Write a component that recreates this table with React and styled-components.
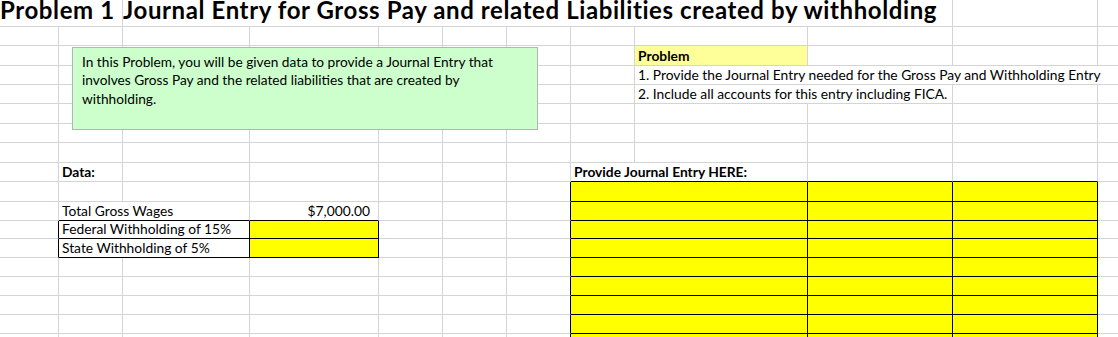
import React from 'react';
import styled, { createGlobalStyle } from 'styled-components';

//column widths and row heights of the sheet (A..L, rows 1..18)
const COLS = [59, 64, 127, 129, 64, 64, 64, 64, 173, 145, 145, 60];
const ROWS = [27, 19, 20, 19, 19, 20, 19, 20, 19, 20, 19, 18, 19, 19, 19, 19, 19, 19];

const GRID = '#d4d4d4';
const BLACK = '#000';
const YELLOW = '#ffff00';

const GlobalStyle = createGlobalStyle`
  html, body {
    margin: 0;
    padding: 0;
    background: #fff;
    overflow: hidden;
  }
  body {
    font-family: Lato, "Open Sans", "Liberation Sans", sans-serif;
    color: #000;
  }
`;

const Page = styled.div`
  position: relative;
  width: 1118px;
  height: 337px;
  overflow: hidden;
`;

const Sheet = styled.div`
  display: grid;
  grid-template-columns: ${COLS.map(w => `${w}px`).join(' ')};
  grid-template-rows: ${ROWS.map(h => `${h}px`).join(' ')};
`;

const Cell = styled.div`
  box-sizing: border-box;
  grid-column: span ${p => p.$span || 1};
  display: flex;
  align-items: flex-end;
  justify-content: ${p => (p.$right ? 'flex-end' : 'flex-start')};
  padding: ${p => (p.$right ? '0 8px 1px 0' : '0 0 1px 3px')};
  background: ${p => p.$bg || 'transparent'};
  border-right: 1px solid ${p => p.$rb || GRID};
  border-bottom: 1px solid ${p => p.$bb || GRID};
  font-size: 13.8px;
  line-height: 16px;
  font-weight: ${p => (p.$bold ? 700 : 400)};
  white-space: nowrap;
  overflow: visible;
`;

const TitleCell = styled(Cell)`
  font-size: 24px;
  letter-spacing: 0.6px;
  line-height: 26px;
  font-weight: 700;
  padding: 0 0 3px 0;
`;

//the green text box floats over the cells like an Excel shape
const NoteBox = styled.div`
  position: absolute;
  left: 72px;
  top: 47px;
  width: 466px;
  height: 83px;
  box-sizing: border-box;
  background: #ccffcc;
  border: 1px solid #b4b4b4;
  padding: 5px 9px;
  font-size: 13.7px;
  line-height: 18.3px;
`;

const journalRow = [
  { c: 6, rb: BLACK },
  { c: 7, span: 2, bg: YELLOW, rb: BLACK, bb: BLACK },
  { c: 9, bg: YELLOW, rb: BLACK, bb: BLACK },
  { c: 10, bg: YELLOW, rb: BLACK, bb: BLACK },
];

const dataRow = label => [
  { c: 0, rb: BLACK },
  { c: 1, span: 2, text: label, rb: BLACK, bb: BLACK },
  { c: 3, bg: YELLOW, rb: BLACK, bb: BLACK },
];

const SHEET = {
  0: [
    { c: 0, span: 2, text: 'Problem 1', title: true },
    { c: 2, span: 8, text: 'Journal Entry for Gross Pay and related Liabilities created by withholding', title: true },
  ],
  2: [{ c: 8, text: 'Problem', bold: true, bg: '#ffff99' }],
  3: [{ c: 8, span: 4, text: '1. Provide the Journal Entry needed for the Gross Pay and Withholding Entry' }],
  4: [{ c: 8, span: 2, text: '2. Include all accounts for this entry including FICA.' }],
  8: [
    { c: 1, text: 'Data:', bold: true },
    { c: 7, span: 2, text: 'Provide Journal Entry HERE:', bold: true, bb: BLACK },
    { c: 9, bb: BLACK },
    { c: 10, bb: BLACK },
  ],
  9: journalRow,
  10: [
    { c: 1, span: 2, text: 'Total Gross Wages', bb: BLACK },
    { c: 3, text: '$7,000.00', right: true, bb: BLACK },
    ...journalRow,
  ],
  11: [...dataRow('Federal Withholding of 15%'), ...journalRow],
  12: [...dataRow('State Withholding of 5%'), ...journalRow],
  13: journalRow,
  14: journalRow,
  15: journalRow,
  16: journalRow,
  17: journalRow,
};

//fill every row with blank cells around the ones that hold something
const buildRow = (r) => {
  const specials = SHEET[r] || [];
  const out = [];
  let c = 0;
  while (c < COLS.length) {
    const s = specials.find(x => x.c === c);
    if (s) {
      out.push({ ...s, key: `${r}-${c}` });
      c += s.span || 1;
    } else {
      out.push({ c, key: `${r}-${c}` });
      c += 1;
    }
  }
  return out;
};

const App = () => {
  return (
    <Page>
      <GlobalStyle />
      <Sheet>
        {ROWS.map((_, r) =>
          buildRow(r).map(cell => {
            const Comp = cell.title ? TitleCell : Cell;
            return (
              <Comp
                key={cell.key}
                $span={cell.span}
                $bg={cell.bg}
                $rb={cell.rb}
                $bb={cell.bb}
                $bold={cell.bold}
                $right={cell.right}
              >
                {cell.text}
              </Comp>
            );
          })
        )}
      </Sheet>
      <NoteBox>
        In this Problem, you will be given data to provide a Journal Entry that
        <br />
        involves Gross Pay and the related liabilities that are created by
        <br />
        withholding.
      </NoteBox>
    </Page>
  );
};

export default App;
